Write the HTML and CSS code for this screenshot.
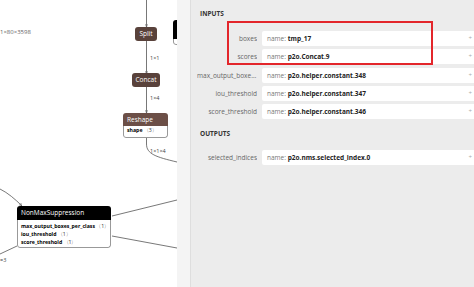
FILE: index.html
```html
<!DOCTYPE html>
<html>
<head>
<meta charset="utf-8">
<link rel="stylesheet" href="styles.css">
</head>
<body>
<div class="app">
  <div class="canvas">
    <svg class="edges" width="177" height="287" viewBox="0 0 177 287">
      <defs>
        <marker id="arr" viewBox="0 0 6 6" refX="6" refY="3" markerWidth="4" markerHeight="4" orient="auto">
          <path d="M0 0 L6 3 L0 6 Z" fill="#333"/>
        </marker>
      </defs>
      <path d="M146.5 0 L146.5 27" marker-end="url(#arr)"/>
      <path d="M146.5 41 L146.5 74" marker-end="url(#arr)"/>
      <path d="M146.5 87 L146.5 113" marker-end="url(#arr)"/>
      <path d="M146.5 138 L146.5 144 C146.5 154 156 157 177 162"/>
      <path d="M112 216 L177 200"/>
      <path d="M112 236 L177 248"/>
      <path d="M0 189 C8 193 15 199 22 206" marker-end="url(#arr)"/>
      <path d="M0 254 L17 246"/>
    </svg>
    <span class="elabel l-top">1×80×3598</span>
    <span class="elabel l-a">1×1</span>
    <span class="elabel l-b">1×4</span>
    <span class="elabel l-c">1×1×4</span>
    <span class="elabel l-d">=3</span>

    <div class="node n-hidden"><div class="head black"></div><div class="body"></div></div>
    <div class="node n-split"><div class="head tensor">Split</div></div>
    <div class="node n-concat"><div class="head tensor">Concat</div></div>
    <div class="node n-reshape">
      <div class="head shape">Reshape</div>
      <div class="body"><div class="attr"><b>shape</b> 〈3〉</div></div>
    </div>
    <div class="node n-nms">
      <div class="head black">NonMaxSuppression</div>
      <div class="body">
        <div class="attr"><b>max_output_boxes_per_class</b> 〈1〉</div>
        <div class="attr"><b>iou_threshold</b> 〈1〉</div>
        <div class="attr"><b>score_threshold</b> 〈1〉</div>
      </div>
    </div>
  </div>

  <aside class="sidebar">
    <div class="strip"></div>
    <div class="panel">
      <div class="section-title">INPUTS</div>
      <div class="rows">
        <div class="row"><div class="label">boxes</div><div class="value"><span class="k">name: </span><b>tmp_17</b><span class="plus">+</span></div></div>
        <div class="row"><div class="label">scores</div><div class="value"><span class="k">name: </span><b>p2o.Concat.9</b><span class="plus">+</span></div></div>
        <div class="row"><div class="label">max_output_boxes_per_class</div><div class="value"><span class="k">name: </span><b>p2o.helper.constant.348</b><span class="plus">+</span></div></div>
        <div class="row"><div class="label">iou_threshold</div><div class="value"><span class="k">name: </span><b>p2o.helper.constant.347</b><span class="plus">+</span></div></div>
        <div class="row"><div class="label">score_threshold</div><div class="value"><span class="k">name: </span><b>p2o.helper.constant.346</b><span class="plus">+</span></div></div>
      </div>
      <div class="section-title outputs">OUTPUTS</div>
      <div class="rows">
        <div class="row"><div class="label">selected_indices</div><div class="value"><span class="k">name: </span><b>p2o.nms.selected_index.0</b><span class="plus">+</span></div></div>
      </div>
    </div>
    <div class="highlight"></div>
  </aside>
</div>
</body>
</html>
```

FILE: styles.css
```css
html, body {
  margin: 0;
  padding: 0;
}
body {
  width: 474px;
  height: 287px;
  overflow: hidden;
  font-family: "Open Sans", "Noto Sans", sans-serif;
}
.app {
  display: flex;
  width: 474px;
  height: 287px;
}
.canvas {
  position: relative;
  width: 177px;
  flex: none;
  height: 287px;
  background: #fff;
  overflow: hidden;
}
.edges {
  position: absolute;
  left: 0;
  top: 0;
}
.edges path {
  fill: none;
  stroke: #555;
  stroke-width: 0.8;
}
.elabel {
  position: absolute;
  font-size: 5.5px;
  line-height: 7px;
  color: #444;
  white-space: nowrap;
}
.l-top { left: 0; top: 29px; color: #666; font-size: 6px; }
.l-a { left: 150px; top: 55px; }
.l-b { left: 150px; top: 95px; }
.l-c { left: 150px; top: 148px; }
.l-d { left: 0; top: 257px; }

.node {
  position: absolute;
  border-radius: 3px;
  overflow: hidden;
}
.head {
  color: #fff;
  font-size: 6.5px;
  line-height: 14px;
  height: 14px;
  padding: 0 4px;
  white-space: nowrap;
}
.tensor { background: rgb(89, 66, 59); text-align: center; }
.shape { background: rgb(108, 79, 71); }
.black { background: #000; }
.body {
  background: #fff;
  border: 1px solid #999;
  border-top: none;
  border-radius: 0 0 3px 3px;
  padding: 1px 3px;
}
.attr {
  font-size: 5.2px;
  line-height: 8px;
  color: #333;
  white-space: nowrap;
}
.attr b { color: #000; }
.n-split { left: 135px; top: 27px; width: 22px; }
.n-split .head { padding: 0; }
.n-concat { left: 132px; top: 73px; width: 28px; }
.n-concat .head { padding: 0; }
.n-reshape { left: 123px; top: 113px; width: 45px; }
.n-reshape .head { height: 13px; line-height: 13px; }
.n-reshape .body { padding: 0 3px; height: 11px; line-height: 11px; }
.n-nms { left: 17px; top: 206px; width: 94px; }
.n-nms .body { padding: 2px 3px 1px; }
.n-hidden { left: 173px; top: 20px; width: 40px; }
.n-hidden .head { height: 19px; }
.n-hidden .body { height: 5px; padding: 0; }

.sidebar {
  position: relative;
  flex: 1;
  display: flex;
  background: #ececec;
  height: 287px;
  overflow: hidden;
}
.strip {
  width: 13px;
  flex: none;
  background: #f4f4f4;
  border-right: 1px solid #dedede;
}
.panel {
  flex: 1;
  padding: 9px 0 0 6px;
}
.section-title {
  font-size: 6.5px;
  font-weight: 700;
  line-height: 10px;
  color: #333;
  padding-left: 3px;
  margin-bottom: 12px;
}
.section-title.outputs {
  margin-top: 10px;
  margin-bottom: 11px;
}
.rows {
  display: flex;
  flex-direction: column;
  gap: 3.3px;
}
.row {
  display: flex;
  gap: 5px;
  height: 15px;
}
.label {
  width: 60px;
  flex: none;
  text-align: right;
  font-size: 6.5px;
  line-height: 15px;
  color: #666;
  white-space: nowrap;
  overflow: hidden;
  text-overflow: ellipsis;
}
.value {
  flex: 1;
  display: flex;
  align-items: center;
  background: #fff;
  border-radius: 2px 0 0 2px;
  padding: 0 2px 0 5px;
  font-size: 6.5px;
  line-height: 15px;
  color: #333;
  white-space: nowrap;
}
.value .k {
  color: #777;
  white-space: pre;
}
.value b {
  color: #222;
}
.plus {
  margin-left: auto;
  color: #aaa;
  font-size: 6px;
}
.highlight {
  position: absolute;
  left: 50px;
  top: 21px;
  width: 206px;
  height: 44px;
  box-sizing: border-box;
  border: 2px solid #e3262b;
}
```
